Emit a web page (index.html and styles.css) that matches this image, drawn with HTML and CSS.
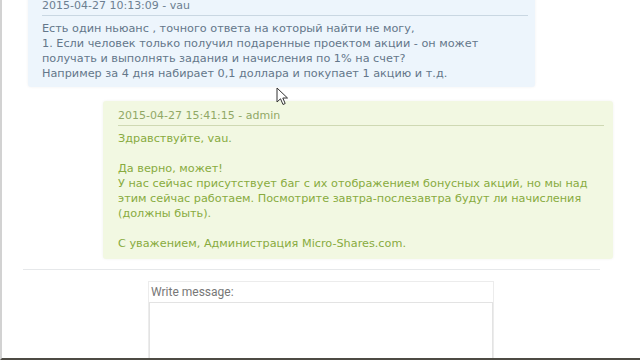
FILE: index.html
```html
<!DOCTYPE html>
<html lang="ru">
<head>
    <meta charset="UTF-8">
    <meta name="viewport" content="width=device-width, initial-scale=1.0">
    <title>Тикет</title>
    <link rel="stylesheet" href="styles.css">
</head>
<body>
    <div class="page">
        <div class="msg msg-user">
            <div class="msg-head">2015-04-27 10:13:09 - vau</div>
            <div class="msg-text">Есть один ньюанс , точного ответа на который найти не могу,<br>
1. Если человек только получил подаренные проектом акции - он может<br>
получать и выполнять задания и начисления по 1% на счет?<br>
Например за 4 дня набирает 0,1 доллара и покупает 1 акцию и т.д.</div>
        </div>

        <div class="msg msg-admin">
            <div class="msg-head">2015-04-27 15:41:15 - admin</div>
            <div class="msg-text">Здравствуйте, vau.<br>
<br>
Да верно, может!<br>
У нас сейчас присутствует баг с их отображением бонусных акций, но мы над<br>
этим сейчас работаем. Посмотрите завтра-послезавтра будут ли начисления<br>
(должны быть).<br>
<br>
С уважением, Администрация Micro-Shares.com.</div>
        </div>

        <hr class="sep">

        <form class="reply" onsubmit="return false;">
            <label class="reply-label" for="reply-text">Write message:</label>
            <textarea id="reply-text" class="reply-text"></textarea>
        </form>

        <!-- mouse pointer from the recording -->
        <svg class="pointer" width="13" height="19" viewBox="0 0 13 19">
            <path d="M1 1 L1 15 L4.5 11.8 L7 17.5 L9.2 16.5 L6.8 11 L11.5 11 Z" fill="#fff" stroke="#333" stroke-width="1" stroke-linejoin="round"/>
        </svg>
    </div>
</body>
</html>
```

FILE: styles.css
```css
body {
    margin: 0;
    padding: 0;
    background-color: #fff;
    overflow: hidden;
}

.page {
    position: relative;
    height: 358px;
    border-left: 2px solid #d2d2d2;
    border-bottom: 2px solid #4d4b44;
    overflow: hidden;
    font-family: 'DejaVu Sans', sans-serif;
    font-size: 11.25px;
    line-height: 15px;
}

.msg {
    border-radius: 3px;
    box-shadow: 0 0 3px rgba(0, 0, 0, 0.06);
}

.msg-head {
    font-size: 11px;
    padding-bottom: 2px;
    margin-bottom: 5px;
}

.msg-user {
    margin: -4px 0 0 26px;
    width: 486px;
    padding: 2px 7px 6px 14px;
    background-color: #edf5fc;
    color: #64778a;
}

.msg-user .msg-head {
    color: #6c7f91;
    border-bottom: 1px solid #c9d7e2;
}

.msg-admin {
    margin: 14px 0 0 101px;
    width: 486px;
    padding: 7px 9px 8px 15px;
    background-color: #f2f8e2;
    color: #88ab3e;
}

.msg-admin .msg-head {
    color: #91a866;
    border-bottom: 1px solid #cfd9b3;
}

.sep {
    margin: 10px 0 0 21px;
    width: 577px;
    border: none;
    border-top: 1px solid #e6e8ea;
}

.reply {
    display: flex;
    flex-direction: column;
    margin: 11px 0 0 146px;
    width: 344px;
    border: 1px solid #ececec;
    border-bottom: none;
}

.reply-label {
    font-family: 'Roboto', sans-serif;
    font-size: 12px;
    line-height: 19px;
    color: #777;
    padding: 1px 0 0 2px;
}

.reply-text {
    height: 70px;
    margin: 0;
    border: 1px solid #e3e3e3;
    resize: none;
    outline: none;
}

.pointer {
    position: absolute;
    left: 274px;
    top: 87px;
}
```
